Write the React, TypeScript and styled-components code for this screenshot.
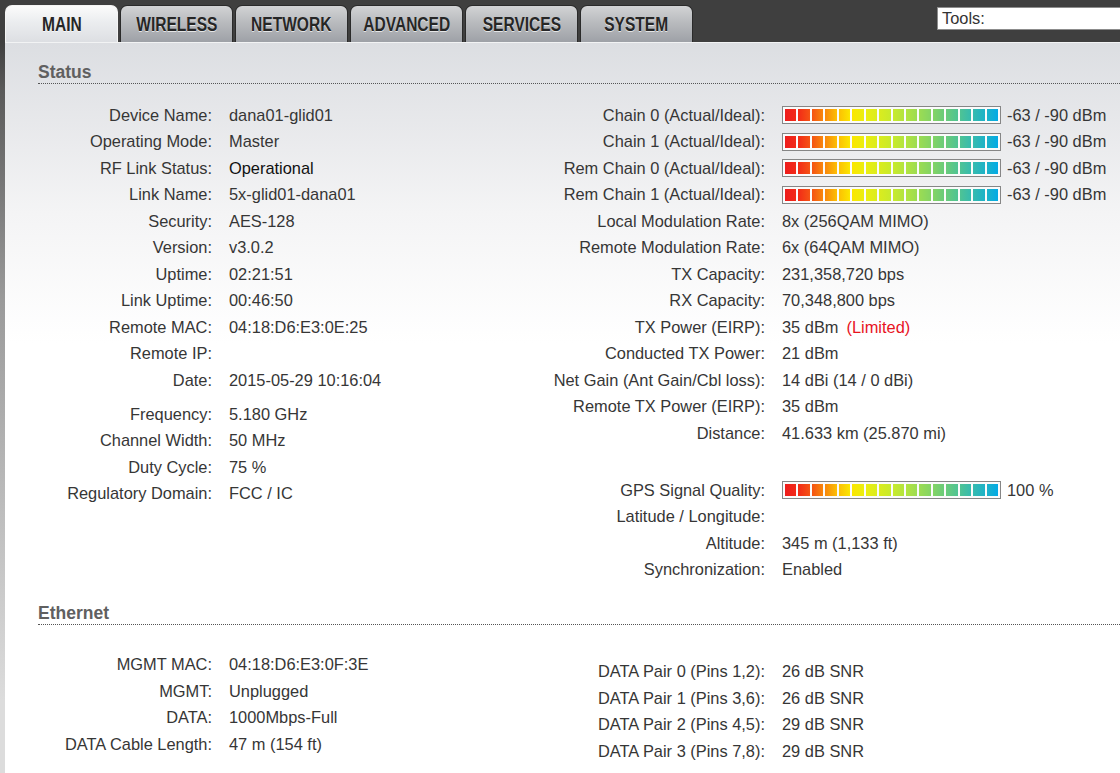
import { Fragment } from 'react';
import styled, { createGlobalStyle } from 'styled-components';

const GlobalStyle = createGlobalStyle`
  html, body {
    margin: 0;
    padding: 0;
  }
  body {
    width: 1120px;
    height: 773px;
    overflow: hidden;
    background: linear-gradient(#3f3f3f 0, #3f3f3f 42px, #5a5a5a 90px, #9a9a9a 300px, #dcdcdc 700px);
    font-family: "Liberation Sans", Arial, sans-serif;
    color: #333;
  }
`;

const Header = styled.div`
  display: flex;
  align-items: flex-end;
  height: 42px;
  padding-left: 5px;
  overflow: hidden;
`;

const Tab = styled.div<{ $active?: boolean }>`
  width: 113px;
  height: ${(p) => (p.$active ? 38 : 37)}px;
  margin-right: 2px;
  margin-bottom: ${(p) => (p.$active ? -1 : 0)}px;
  position: relative;
  z-index: ${(p) => (p.$active ? 1 : 0)};
  flex-shrink: 0;
  box-sizing: border-box;
  display: flex;
  align-items: center;
  justify-content: center;
  padding-bottom: ${(p) => (p.$active ? 2 : 1)}px;
  border-radius: 7px 7px 0 0;
  border: 1px solid ${(p) => (p.$active ? '#f4f4f4' : '#2a2a2a')};
  border-bottom: none;
  background: ${(p) =>
    p.$active
      ? 'linear-gradient(#fbfbfb 0, #eceef0 40%, #dcdee2 100%)'
      : 'linear-gradient(#d2d3d5 0, #b9bbbe 45%, #9ea1a7 100%)'};
`;

const TabText = styled.span`
  display: inline-block;
  transform: scaleX(0.74);
  font-family: "Liberation Sans", Arial, sans-serif;
  font-weight: bold;
  font-size: 21px;
  color: #262626;
  text-shadow: 0 1px 0 rgba(255, 255, 255, 0.7);
  white-space: nowrap;
`;

const Tools = styled.div`
  margin-left: auto;
  align-self: flex-start;
  margin-top: 7px;
  flex-shrink: 0;
  width: 186px;
  margin-right: -3px;
  height: 23px;
  box-sizing: border-box;
  border: 1px solid #8c8c8c;
  background: #fff;
  padding-left: 4px;
  font-size: 16.4px;
  line-height: 21px;
  color: #333;
`;

const Panel = styled.div`
  margin-left: 5px;
  height: 731px;
  box-sizing: border-box;
  border-top: 1px solid #f2f3f4;
  padding-left: 33px;
  background: linear-gradient(#dcdee2 0, #f4f4f5 170px, #ffffff 300px);
`;

const SectionTitle = styled.div<{ $top: number }>`
  margin-top: ${(p) => p.$top}px;
  line-height: 21px;
  font-size: 17.5px;
  font-weight: bold;
  color: #606060;
  border-bottom: 1px dotted #555;
`;

const Columns = styled.div<{ $top: number }>`
  display: flex;
  margin-top: ${(p) => p.$top}px;
`;

const Column = styled.div<{ $width?: number; $top?: number }>`
  ${(p) => (p.$width ? `width: ${p.$width}px;` : 'flex: 1;')}
  padding-top: ${(p) => p.$top ?? 0}px;
`;

const Row = styled.div<{ $label: number }>`
  display: grid;
  grid-template-columns: ${(p) => p.$label}px 1fr;
  column-gap: 17px;
  align-items: center;
  height: 26.5px;
  font-size: 16.4px;
  white-space: nowrap;
`;

const Label = styled.div`
  text-align: right;
  color: #363636;
`;

const Value = styled.div<{ $strong?: boolean }>`
  display: flex;
  align-items: center;
  color: ${(p) => (p.$strong ? '#111' : '#363636')};
`;

const Warn = styled.span`
  color: #e8141e;
  margin-left: 8px;
`;

const Spacer = styled.div<{ $h: number }>`
  height: ${(p) => p.$h}px;
`;

const Bar = styled.div`
  width: 219px;
  height: 18px;
  box-sizing: border-box;
  border: 1px solid #868686;
  background: #fbfbfb;
  padding: 2px;
  display: flex;
  gap: 2px;
  margin-right: 6px;
`;

const Cell = styled.div<{ $from: string; $to: string }>`
  flex: 1;
  background: linear-gradient(90deg, ${(p) => p.$from}, ${(p) => p.$to});
`;

const stops = [
  '#ee1c1c', '#f22a18', '#f55314', '#f8870c', '#fcc004', '#fbe600', '#ebee10', '#dbec1e',
  '#c8ea2c', '#b3e43e', '#9cdc52', '#84d464', '#6acb7a', '#4fc394', '#36bbae', '#1db2c8', '#03aae6',
];

function SignalBar() {
  return (
    <Bar>
      {stops.slice(0, 16).map((c, i) => (
        <Cell key={i} $from={c} $to={stops[i + 1]} />
      ))}
    </Bar>
  );
}

type Item = { label: string; value?: React.ReactNode; strong?: boolean; bar?: boolean } | { gap: number };

const statusLeft: Item[] = [
  { label: 'Device Name:', value: 'dana01-glid01' },
  { label: 'Operating Mode:', value: 'Master' },
  { label: 'RF Link Status:', value: 'Operational', strong: true },
  { label: 'Link Name:', value: '5x-glid01-dana01' },
  { label: 'Security:', value: 'AES-128' },
  { label: 'Version:', value: 'v3.0.2' },
  { label: 'Uptime:', value: '02:21:51' },
  { label: 'Link Uptime:', value: '00:46:50' },
  { label: 'Remote MAC:', value: '04:18:D6:E3:0E:25' },
  { label: 'Remote IP:', value: '' },
  { label: 'Date:', value: '2015-05-29 10:16:04' },
  { gap: 7.5 },
  { label: 'Frequency:', value: '5.180 GHz' },
  { label: 'Channel Width:', value: '50 MHz' },
  { label: 'Duty Cycle:', value: '75 %' },
  { label: 'Regulatory Domain:', value: 'FCC / IC' },
];

const statusRight: Item[] = [
  { label: 'Chain 0 (Actual/Ideal):', value: '-63 / -90 dBm', bar: true },
  { label: 'Chain 1 (Actual/Ideal):', value: '-63 / -90 dBm', bar: true },
  { label: 'Rem Chain 0 (Actual/Ideal):', value: '-63 / -90 dBm', bar: true },
  { label: 'Rem Chain 1 (Actual/Ideal):', value: '-63 / -90 dBm', bar: true },
  { label: 'Local Modulation Rate:', value: '8x (256QAM MIMO)' },
  { label: 'Remote Modulation Rate:', value: '6x (64QAM MIMO)' },
  { label: 'TX Capacity:', value: '231,358,720 bps' },
  { label: 'RX Capacity:', value: '70,348,800 bps' },
  {
    label: 'TX Power (EIRP):',
    value: (
      <>
        35 dBm<Warn>(Limited)</Warn>
      </>
    ),
  },
  { label: 'Conducted TX Power:', value: '21 dBm' },
  { label: 'Net Gain (Ant Gain/Cbl loss):', value: '14 dBi (14 / 0 dBi)' },
  { label: 'Remote TX Power (EIRP):', value: '35 dBm' },
  { label: 'Distance:', value: '41.633 km (25.870 mi)' },
  { gap: 30.5 },
  { label: 'GPS Signal Quality:', value: '100 %', bar: true },
  { label: 'Latitude / Longitude:', value: '' },
  { label: 'Altitude:', value: '345 m (1,133 ft)' },
  { label: 'Synchronization:', value: 'Enabled' },
];

const ethLeft: Item[] = [
  { label: 'MGMT MAC:', value: '04:18:D6:E3:0F:3E' },
  { label: 'MGMT:', value: 'Unplugged' },
  { label: 'DATA:', value: '1000Mbps-Full' },
  { label: 'DATA Cable Length:', value: '47 m (154 ft)' },
];

const ethRight: Item[] = [
  { label: 'DATA Pair 0 (Pins 1,2):', value: '26 dB SNR' },
  { label: 'DATA Pair 1 (Pins 3,6):', value: '26 dB SNR' },
  { label: 'DATA Pair 2 (Pins 4,5):', value: '29 dB SNR' },
  { label: 'DATA Pair 3 (Pins 7,8):', value: '29 dB SNR' },
];

function Fields({ items, labelWidth }: { items: Item[]; labelWidth: number }) {
  return (
    <>
      {items.map((it, i) => (
        <Fragment key={i}>
          {'gap' in it ? (
            <Spacer $h={it.gap} />
          ) : (
            <Row $label={labelWidth}>
              <Label>{it.label}</Label>
              <Value $strong={it.strong}>
                {it.bar && <SignalBar />}
                {it.value}
              </Value>
            </Row>
          )}
        </Fragment>
      ))}
    </>
  );
}

const tabs = ['MAIN', 'WIRELESS', 'NETWORK', 'ADVANCED', 'SERVICES', 'SYSTEM'];

export default function App() {
  return (
    <>
      <GlobalStyle />
      <Header>
        {tabs.map((t, i) => (
          <Tab key={t} $active={i === 0}>
            <TabText>{t}</TabText>
          </Tab>
        ))}
        <Tools>Tools:</Tools>
      </Header>
      <Panel>
        <SectionTitle $top={19}>Status</SectionTitle>
        <Columns $top={18}>
          <Column $width={500}>
            <Fields items={statusLeft} labelWidth={174} />
          </Column>
          <Column>
            <Fields items={statusRight} labelWidth={227} />
          </Column>
        </Columns>
        <SectionTitle $top={20}>Ethernet</SectionTitle>
        <Columns $top={26.5}>
          <Column $width={500}>
            <Fields items={ethLeft} labelWidth={174} />
          </Column>
          <Column $top={7}>
            <Fields items={ethRight} labelWidth={227} />
          </Column>
        </Columns>
      </Panel>
    </>
  );
}
